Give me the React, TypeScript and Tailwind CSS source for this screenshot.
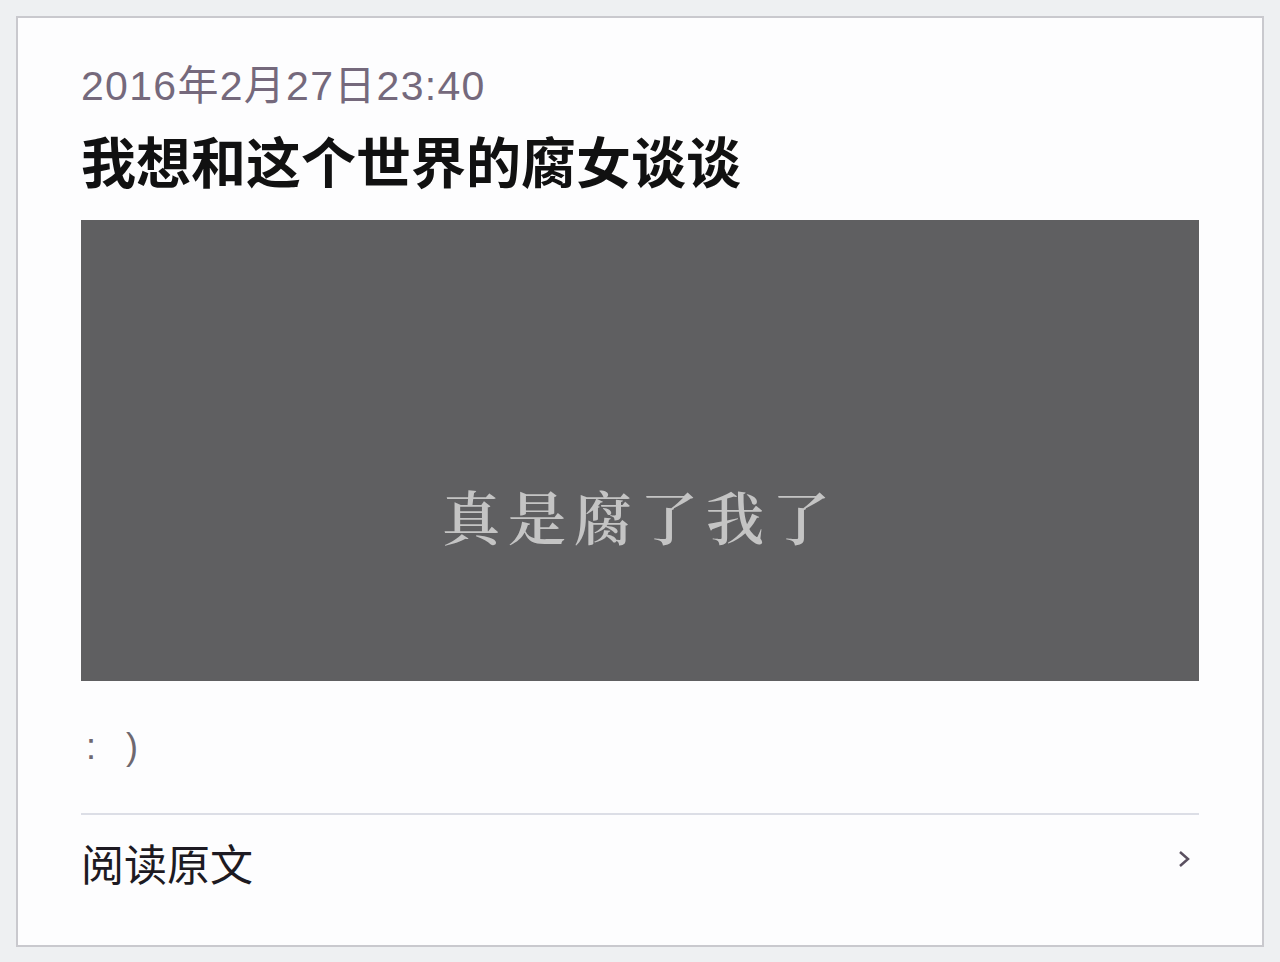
export default function App() {
  return (
    <div className="h-[962px] w-[1280px] bg-[#eef0f2] p-4 font-['Liberation_Sans','Noto_Sans_CJK_SC',sans-serif]">
      <div className="flex h-[931px] flex-col border-2 border-[#c9c9ce] bg-[#fdfdfe] pl-[63px] pr-[63px] pt-[40px]">
        {/* Date */}
        <div className="text-[41px] leading-[56px] tracking-[1.3px] text-[#75697c]">2016年2月27日23:40</div>

        {/* Title */}
        <h1 className="mt-[14px] text-[55px] font-bold leading-[72px] text-[#111111]">我想和这个世界的腐女谈谈</h1>

        {/* Picture */}
        <div className="mt-[20px] flex h-[461px] items-center justify-center bg-[#5f5f61] pt-[130px]">
          <span className="font-['Noto_Serif_CJK_SC','Liberation_Serif',serif] text-[58px] font-semibold tracking-[8px] text-[#c4c4c4]">
            真是腐了我了
          </span>
        </div>

        {/* Smiley */}
        <div className="mt-[38px] pl-[5px] text-[36px] leading-[56px] text-[#6e6870]">:&nbsp;&nbsp;&nbsp;)</div>

        {/* Footer */}
        <div className="mt-[38px] flex items-center justify-between border-t-2 border-[#dcdee6] pt-[23px]">
          <span className="text-[43px] leading-[56px] text-[#1d1a22]">阅读原文</span>
          <svg width="16" height="24" viewBox="0 0 16 24" className="mr-[6px] -mt-[12px]">
            <path d="M3 4 L11 11 L3 18" fill="none" stroke="#5a5060" strokeWidth="2.5" />
          </svg>
        </div>
      </div>
    </div>
  );
}
